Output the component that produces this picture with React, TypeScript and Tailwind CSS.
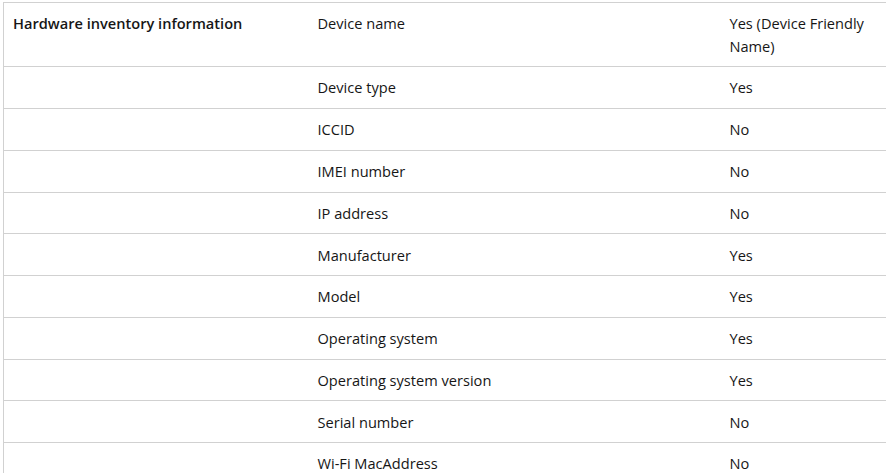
import React from 'react';

const rows = [
  { section: 'Hardware inventory information', name: 'Device name', value: 'Yes (Device Friendly Name)' },
  { section: '', name: 'Device type', value: 'Yes' },
  { section: '', name: 'ICCID', value: 'No' },
  { section: '', name: 'IMEI number', value: 'No' },
  { section: '', name: 'IP address', value: 'No' },
  { section: '', name: 'Manufacturer', value: 'Yes' },
  { section: '', name: 'Model', value: 'Yes' },
  { section: '', name: 'Operating system', value: 'Yes' },
  { section: '', name: 'Operating system version', value: 'Yes' },
  { section: '', name: 'Serial number', value: 'No' },
  { section: '', name: 'Wi-Fi MacAddress', value: 'No' },
];

export default function App() {
  return (
    <div className="w-[886px] h-[473px] overflow-hidden bg-white pt-[2px] pl-[3px] font-['Open_Sans',sans-serif] text-[14.6px] leading-[22.4px] text-[#161616]">
      <table className="border-collapse border-l border-[#d1d1d1] w-[900px] table-fixed">
        <colgroup>
          <col className="w-[305px]" />
          <col className="w-[412px]" />
          <col className="w-[183px]" />
        </colgroup>
        <tbody>
          {rows.map((row, i) => (
            <tr key={i} className="border-t border-[#d1d1d1]">
              <td className="align-top py-[9.2px] pl-[9px] pr-[10px] font-semibold">
                {row.section}
              </td>
              <td className="align-top py-[9.2px] pl-[9px] pr-[10px]">
                {row.name}
              </td>
              <td className="align-top py-[9.2px] pl-[9px] pr-[30px]">
                {row.value}
              </td>
            </tr>
          ))}
        </tbody>
      </table>
    </div>
  );
}
